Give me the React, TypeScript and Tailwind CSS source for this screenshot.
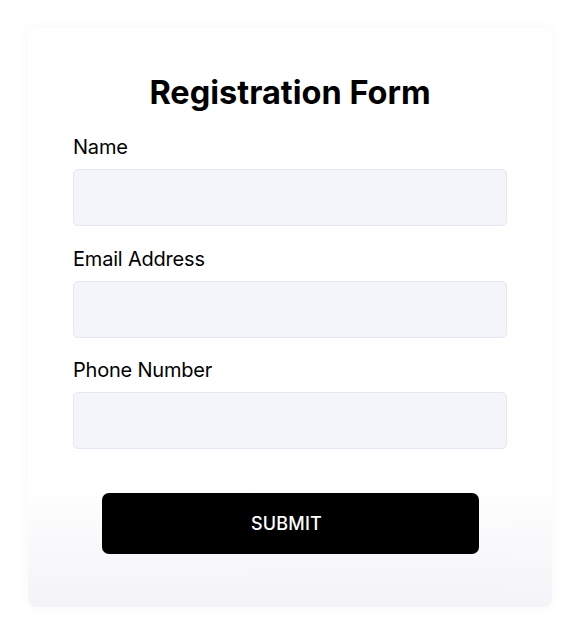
import React from "react";

function Field({ label }: { label: string }) {
  return (
    <div className="flex flex-col gap-2">
      <label className="text-[20px] leading-[28px] tracking-[-0.2px] text-black">{label}</label>
      <div className="h-[57px] w-full rounded-[5px] border border-[#e6e6f2] bg-[#f4f5fa]" />
    </div>
  );
}

export default function App() {
  return (
    <div
      className="min-h-[628px] w-[580px] bg-white pt-[28px]"
      style={{ fontFamily: "Inter, 'Liberation Sans', sans-serif" }}
    >
      <div className="mx-[28px] flex h-[579px] w-[524px] flex-col rounded-[8px] bg-gradient-to-b from-white from-[78%] to-[#f4f4f8] px-[45px] pt-[45px] shadow-[0_0_14px_rgba(0,0,0,0.035)]">
        <h1 className="text-center text-[32.5px] font-bold leading-[40px] text-black">
          Registration Form
        </h1>
        <div className="mt-[20px] flex flex-col gap-[18.5px]">
          <Field label="Name" />
          <Field label="Email Address" />
          <Field label="Phone Number" />
        </div>
        <div className="mt-[44px] flex justify-center">
          <button className="h-[61px] w-[377px] rounded-[7px] bg-black pr-[7px] text-[18px] font-medium tracking-[0.2px] text-white">
            SUBMIT
          </button>
        </div>
      </div>
    </div>
  );
}
